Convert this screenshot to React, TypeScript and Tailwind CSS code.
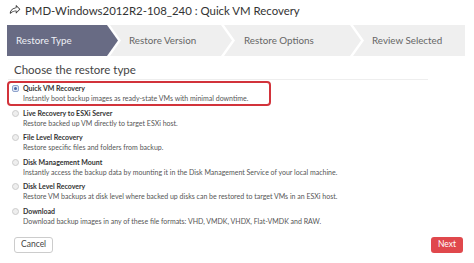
import { PiShareFat } from "react-icons/pi"

const steps = ["Restore Type", "Restore Version", "Restore Options", "Review Selected"]

const options = [
  { title: "Quick VM Recovery", desc: "Instantly boot backup images as ready-state VMs with minimal downtime." },
  { title: "Live Recovery to ESXi Server", desc: "Restore backed up VM directly to target ESXi host." },
  { title: "File Level Recovery", desc: "Restore specific files and folders from backup." },
  { title: "Disk Management Mount", desc: "Instantly access the backup data by mounting it in the Disk Management Service of your local machine." },
  { title: "Disk Level Recovery", desc: "Restore VM backups at disk level where backed up disks can be restored to target VMs in an ESXi host." },
  { title: "Download", desc: "Download backup images in any of these file formats: VHD, VMDK, VHDX, Flat-VMDK and RAW." },
]

export default function App() {
  return (
    <div className="w-[474px] h-[263px] bg-white overflow-hidden font-['Lato','Liberation_Sans',sans-serif]">

      {/* TITLE */}
      <div className="flex items-center gap-[4px] pl-[9px] pt-[2px] h-[18px] text-[#333]">
        <PiShareFat className="w-[12px] h-[12px]" />
        <span className="text-[11.4px] leading-[15px]">PMD-Windows2012R2-108_240 : Quick VM Recovery</span>
      </div>

      {/* STEPPER */}
      <div className="flex mt-[7px] ml-[7px] w-[458px] h-[31px]">
        {steps.map((s, i) => (
          <div
            key={s}
            className={
              (i === 0
                ? "bg-[#686b84] text-[#eef0f6] pl-[9px] [clip-path:polygon(0_0,calc(100%-11px)_0,100%_50%,calc(100%-11px)_100%,0_100%)] w-[111px] "
                : i === 3
                ? "bg-[#efefef] text-[#666] pl-[19px] [clip-path:polygon(0_0,100%_0,100%_100%,0_100%,11px_50%)] flex-1 ml-[-8px] "
                : i === 1
                ? "bg-[#efefef] text-[#666] pl-[19px] [clip-path:polygon(0_0,calc(100%-11px)_0,100%_50%,calc(100%-11px)_100%,0_100%,11px_50%)] w-[122px] ml-[-8px] "
                : "bg-[#efefef] text-[#666] pl-[20px] [clip-path:polygon(0_0,calc(100%-11px)_0,100%_50%,calc(100%-11px)_100%,0_100%,11px_50%)] w-[137px] ml-[-8px] ") +
              "flex items-center text-[9.8px]"
            }
          >
            {s}
          </div>
        ))}
      </div>

      {/* HEADING */}
      <div className="ml-[8px] w-[420px] border-b border-[#eee] pl-[6px] pt-[6px] pb-[2px]">
        <h1 className="text-[11.5px] leading-[15px] text-[#444]">Choose the restore type</h1>
      </div>

      {/* OPTIONS */}
      <div className="ml-[7px] mt-[1px] flex flex-col">
        {options.map((o, i) => (
          <div
            key={o.title}
            className={
              (i === 0 ? "border-[#d2333b] w-[264px] " : "border-transparent ") +
              "border-2 rounded-[4px] h-[24.6px] flex gap-[4px] pl-[3px]"
            }
          >
            <div className="pt-[2px]">
              {i === 0 ? (
                <div className="w-[7px] h-[7px] rounded-[2px] border border-[#8fa3cc] bg-[#dfe7f6] flex items-center justify-center">
                  <div className="w-[3px] h-[3px] rounded-full bg-[#4b66a6]" />
                </div>
              ) : (
                <div className="w-[7px] h-[7px] rounded-full border border-[#ccc] bg-[#eee]" />
              )}
            </div>
            <div className="flex flex-col">
              <span className="text-[7px] leading-[10px] font-bold text-[#333] whitespace-nowrap">{o.title}</span>
              <span className="text-[7px] leading-[10px] text-[#555] whitespace-nowrap">{o.desc}</span>
            </div>
          </div>
        ))}
      </div>

      {/* BUTTONS */}
      <div className="flex justify-between pl-[14px] pr-[11px] mt-[8px]">
        <button className="h-[16px] px-[6px] border border-[#ccc] rounded-[3px] text-[8.5px] text-[#444] bg-white">Cancel</button>
        <button className="h-[16px] px-[7px] rounded-[3px] text-[8.5px] text-white bg-[#e0484c]">Next</button>
      </div>

    </div>
  )
}
